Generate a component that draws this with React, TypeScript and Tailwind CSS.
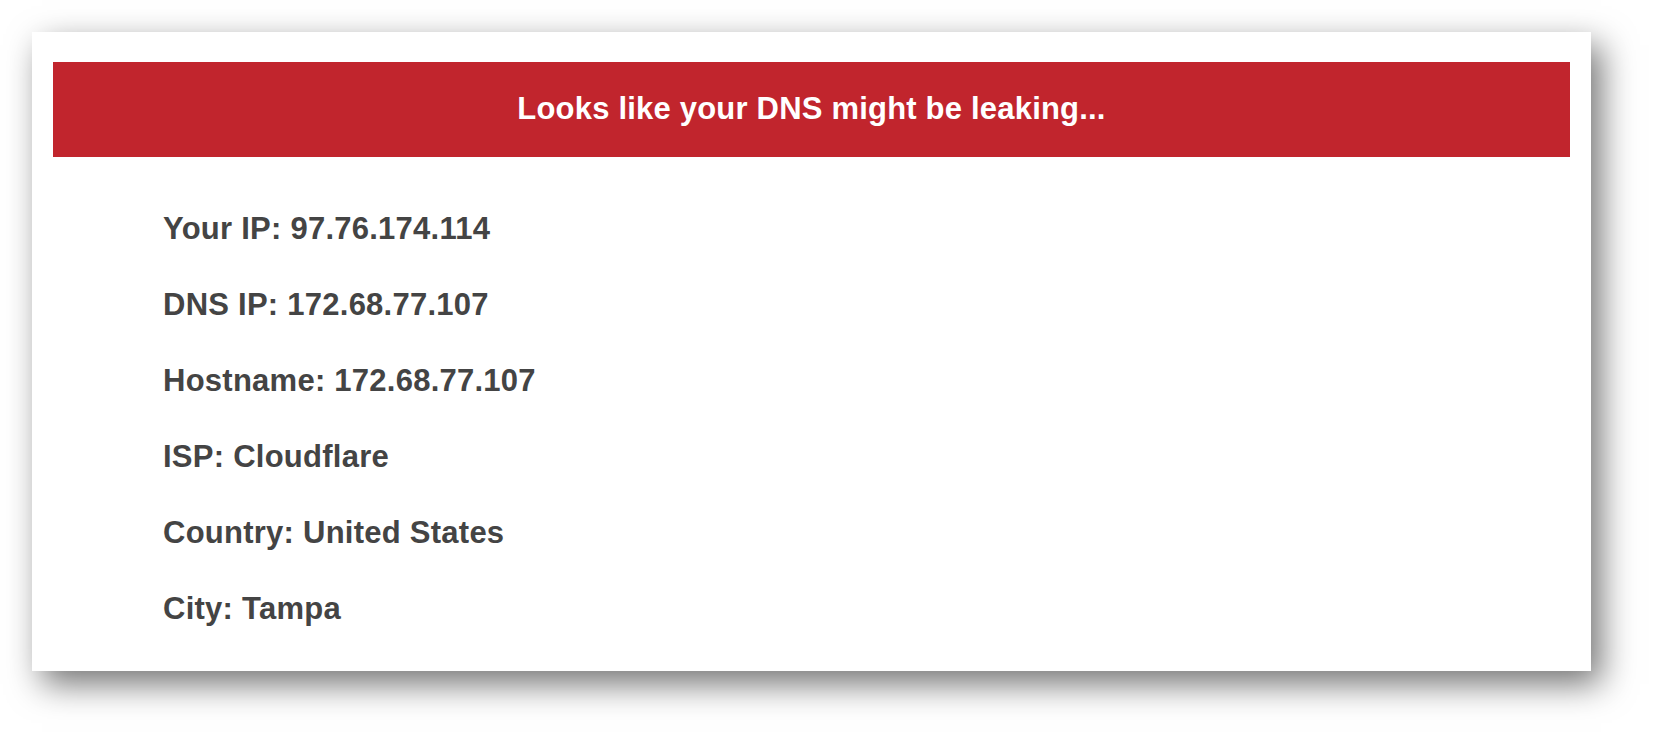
import React from 'react';

const rows: Array<{ label: string; value: string }> = [
  { label: 'Your IP', value: '97.76.174.114' },
  { label: 'DNS IP', value: '172.68.77.107' },
  { label: 'Hostname', value: '172.68.77.107' },
  { label: 'ISP', value: 'Cloudflare' },
  { label: 'Country', value: 'United States' },
  { label: 'City', value: 'Tampa' },
];

const App: React.FC = () => {
  return (
    <div className="min-h-[736px] w-[1656px] bg-white pt-[32px] pl-[32px] font-['Liberation_Sans',Arial,sans-serif]">
      <div className="w-[1559px] h-[639px] bg-white pt-[30px] px-[21px] shadow-[10px_13px_32px_rgba(0,0,0,0.55)]">
        {/* Warning banner */}
        <div className="h-[95px] bg-[#c1252d] flex items-center justify-center">
          <h2 className="text-white font-bold text-[31px] tracking-[0.2px]">Looks like your DNS might be leaking...</h2>
        </div>

        {/* Lookup results */}
        <div className="pt-[34px] pl-[110px]">
          {rows.map(row => (
            <p key={row.label} className="h-[76px] leading-[76px] text-[31px] font-bold tracking-[0.25px] text-[#444444]">
              {row.label}: {row.value}
            </p>
          ))}
        </div>
      </div>
    </div>
  );
};

export default App;
